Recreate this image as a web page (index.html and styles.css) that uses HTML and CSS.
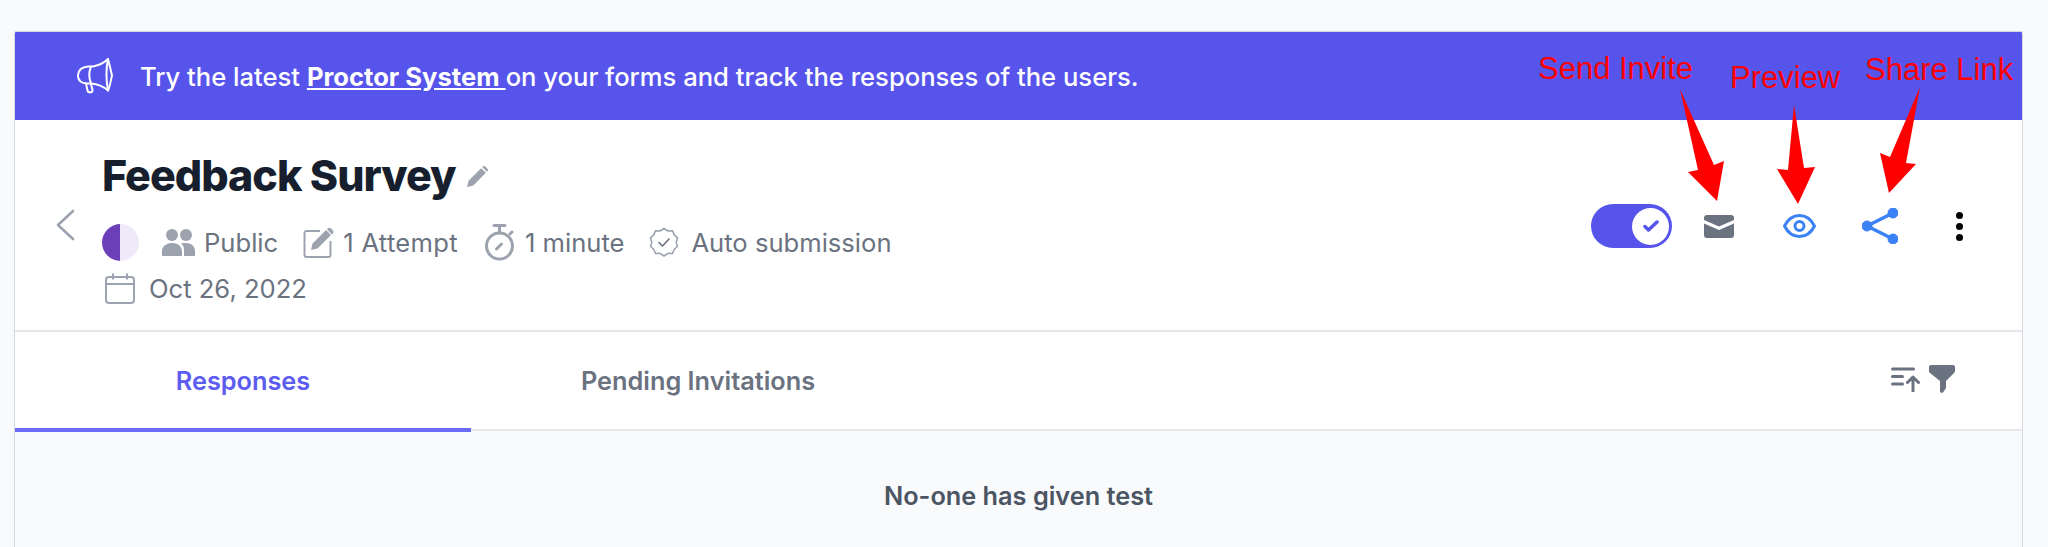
FILE: index.html
```html
<!DOCTYPE html>
<html lang="en">
<head>
<meta charset="utf-8">
<title>Feedback Survey</title>
<link rel="stylesheet" href="styles.css">
</head>
<body>
<main class="card">
  <div class="banner">
    <svg class="banner-icon" viewBox="0 0 36 36" fill="none" stroke="#fff" stroke-width="2" stroke-linejoin="round" stroke-linecap="round"><path d="M11 8.500C6 9 1.500 11 1 17c-.3 5 3 8 9 8.500h4C21 26 27 29 31 32.500c2-4 2.500-9 4-15-1.500-6-2.500-11-4-16.500-4 4-10 6.500-15 7.500z"/><path d="M14 8.500c-2 5-2.500 11 0 17M31 1c-2 10-2 21 0 31.500"/><path d="M9 25.500l1.500 7c.5 2.500 5.500 2.500 5-.5L14 26"/></svg>
    <p class="banner-text">Try the latest <a class="banner-link" href="#">Proctor System </a>on your forms and track the responses of the users.</p>
  </div>

  <section class="header">
    <svg class="back" viewBox="0 0 20 32" fill="none" stroke="#9ca3af" stroke-width="2.600" stroke-linecap="round" stroke-linejoin="round"><path d="M18 2 3 16l15 14"/></svg>
    <div class="info">
      <div class="title-row">
        <h1 class="title">Feedback Survey</h1>
        <svg class="title-edit" viewBox="0 0 22 22" fill="#9ca3af"><path d="M1 21l1.500-6L14.500 3l4.500 4.500L7 19.500zM16 1.500a1.800 1.800 0 0 1 2.500 0l2 2a1.800 1.800 0 0 1 0 2.500L20 6.500 15.500 2z"/></svg>
      </div>
      <div class="meta-row">
        <span class="half"></span>
        <span class="meta">
          <svg class="ic-people" viewBox="0 0 33 27" fill="#9ca3af"><circle cx="10" cy="6" r="6"/><circle cx="24" cy="6" r="6"/><path d="M0 27v-5c0-5 5-8 10-8s9 2 10 8v5zM22 27v-6c0-3-1-5-3-6.500 1.500-.5 3-.5 5-.5 5 0 9 3 9 8v5z"/></svg>
          <span>Public</span>
        </span>
        <span class="meta meta-attempt">
          <svg class="ic-note" viewBox="0 0 31 31" fill="none"><path d="M17 4H3.500A2 2 0 0 0 1.500 6v22a2 2 0 0 0 2 2h22a2 2 0 0 0 2-2V14" stroke="#9ca3af" stroke-width="2"/><path d="M8 23l1.500-6.500L23 3l5 5-13.500 13.500zM25 1.300a2 2 0 0 1 2.700 0l2.300 2.300a2 2 0 0 1 0 2.700L29 7.500 24 2.500z" fill="#9ca3af"/></svg>
          <span>1 Attempt</span>
        </span>
        <span class="meta">
          <svg class="ic-timer" viewBox="0 0 29 37" fill="none" stroke="#9ca3af" stroke-width="3" stroke-linecap="round"><path d="M9 1.500h11M14.500 2v6"/><circle cx="14.500" cy="22" r="13"/><path d="M25 10l2-2M11.500 25l5-5"/></svg>
          <span>1 minute</span>
        </span>
        <span class="meta">
          <svg class="ic-badge" viewBox="0 0 30 30" fill="none" stroke="#9ca3af" stroke-width="1.600" stroke-linecap="round" stroke-linejoin="round"><path d="M15 1.500l4 2.500 4.500-.3 1.800 4.200 3.200 3-1.300 4.600 1.300 4-3.400 3-1.600 4-4.500-.2-4 2.700-4-2.700-4.500.2-1.600-4-3.400-3 1.300-4-1.300-4.600 3.200-3 1.800-4.200 4.500.3z"/><path d="M10 15.500l3.500 3.500 6.500-7" stroke="#6b7280"/></svg>
          <span>Auto submission</span>
        </span>
      </div>
      <div class="date-row">
        <svg class="ic-cal" viewBox="0 0 30 31" fill="none" stroke="#9ca3af" stroke-width="2"><rect x="1" y="4" width="28" height="26" rx="3"/><path d="M1 11h28M8 .5v6M22 .5v6"/></svg>
        <span>Oct 26, 2022</span>
      </div>
    </div>
    <div class="actions">
      <span class="toggle"><span class="knob"><svg viewBox="0 0 16 14" fill="none" stroke="#5754ec" stroke-width="3.500" stroke-linecap="round" stroke-linejoin="round"><path d="M2 7.500l3.500 3.500L14 3"/></svg></span></span>
      <svg class="ic-mail" viewBox="0 0 30 23"><path d="M3 0h24a3 3 0 0 1 3 3v2L15 11.500 0 5V3a3 3 0 0 1 3-3z" fill="#6b7280"/><path d="M0 8.500l15 6.500 15-6.500V20a3 3 0 0 1-3 3H3a3 3 0 0 1-3-3z" fill="#6b7280"/></svg>
      <svg class="ic-eye" viewBox="0 0 33 24" fill="none" stroke="#3b82f6" stroke-width="3"><path d="M1.500 12C5 5 10 1.500 16.500 1.500S28 5 31.500 12C28 19 23 22.500 16.500 22.500S5 19 1.500 12z"/><circle cx="16.500" cy="12" r="4.500"/></svg>
      <svg class="ic-share" viewBox="0 0 36 36" fill="#3b82f6" stroke="#3b82f6"><circle cx="5" cy="18" r="5"/><circle cx="31" cy="5" r="5"/><circle cx="31" cy="31" r="5"/><path d="M5 18 31 5M5 18l26 13" stroke-width="3.500" fill="none"/></svg>
      <span class="dots"><i></i><i></i><i></i></span>
    </div>
  </section>

  <nav class="tabs">
    <a class="tab tab-active" href="#">Responses</a>
    <a class="tab" href="#">Pending Invitations</a>
    <div class="tab-tools">
      <svg class="ic-sort" viewBox="0 0 29 25" fill="none" stroke="#6b7280" stroke-width="3" stroke-linecap="round" stroke-linejoin="round"><path d="M1.500 2h21M1.500 9.500h10M1.500 17h10M22 24V11M16.500 15.500 22 10l5.500 5.500"/></svg>
      <svg class="ic-funnel" viewBox="0 0 26 28" fill="#6b7280"><path d="M2 0h22a2 2 0 0 1 2 2v4c0 1-.5 1.500-1 2l-8 8v7l-3 4.500c-.5.500-3 .500-3-1V16L1 8C.500 7.500 0 7 0 6V2a2 2 0 0 1 2-2z"/></svg>
    </div>
  </nav>

  <p class="empty">No-one has given test</p>
</main>

<svg class="annotations" viewBox="0 0 2048 547" aria-hidden="true">
  <polygon fill="#ff0000" points="1680,89 1714,165 1724,161 1717,201 1688,172 1698,170"/>
  <polygon fill="#ff0000" points="1794,105 1804,168 1815,167 1798,204 1777,169 1788,170"/>
  <polygon fill="#ff0000" points="1920,87 1906,163 1916,164 1889,193 1880,153 1890,157"/>
</svg>
<span class="note note-send">Send Invite</span>
<span class="note note-preview">Preview</span>
<span class="note note-share">Share Link</span>
</body>
</html>
```

FILE: styles.css
```css
* { box-sizing: border-box; }

html, body { height: 100%; }

body {
  margin: 0;
  height: 547px;
  overflow: hidden;
  padding: 31px 25px 0 14px;
  background: #f9fafb;
  font-family: Inter, "Liberation Sans", sans-serif;
  color: #6b7280;
  position: relative;
}

.card {
  height: 516px;
  border: 1px solid #d5d8de;
  border-bottom: 0;
  border-radius: 2px 2px 0 0;
  background: #f9fafb;
  overflow: hidden;
}

.banner {
  height: 88px;
  background: #5754ec;
  display: flex;
  align-items: center;
  padding-left: 62px;
  gap: 27px;
  color: #fff;
}

.banner-icon { width: 36px; height: 36px; flex: none; }

.banner-text {
  margin: 0;
  font-size: 25.6px;
  font-weight: 500;
  white-space: nowrap;
}

.banner-link { color: #fff; font-weight: 700; text-decoration: underline; }

.header {
  height: 210px;
  background: #fff;
  display: flex;
  position: relative;
  padding-left: 40px;
}

.back { width: 20px; height: 32px; margin-top: 89px; flex: none; }

.info { margin-left: 27px; padding-top: 30px; }

.title-row { display: flex; align-items: center; gap: 10px; height: 50px; }

.title {
  margin: 0;
  font-size: 43px;
  line-height: 50px;
  font-weight: 800;
  color: #171f2e;
  letter-spacing: -1px;
  white-space: nowrap;
}

.title-edit { width: 23px; height: 23px; margin-top: 2px; }

.meta-row {
  display: flex;
  align-items: center;
  height: 38px;
  margin-top: 23px;
  gap: 25px;
  font-size: 25.6px;
  white-space: nowrap;
}

.half {
  width: 37px;
  height: 37px;
  border-radius: 50%;
  background: linear-gradient(90deg, #6b3fb8 50%, #efe9f9 50%);
  flex: none;
  margin-right: -2px;
}

.meta { display: flex; align-items: center; gap: 9px; }

.meta-attempt { letter-spacing: 0.3px; margin-right: 2px; }

.ic-people { width: 33px; height: 27px; }
.ic-note { width: 31px; height: 31px; }
.ic-timer { width: 29px; height: 37px; margin-right: 2px; }
.ic-badge { width: 30px; height: 30px; margin-right: 3px; }
.ic-cal { width: 30px; height: 31px; }

.date-row {
  display: flex;
  align-items: center;
  gap: 14px;
  margin: 9px 0 0 3px;
  height: 36px;
  font-size: 25.6px;
  white-space: nowrap;
}

.actions {
  position: absolute;
  top: 84px;
  left: 1576px;
  display: flex;
  align-items: center;
  height: 44px;
}

.toggle {
  width: 81px;
  height: 44px;
  border-radius: 22px;
  background: #5754ec;
  display: flex;
  align-items: center;
  justify-content: flex-end;
  padding-right: 3px;
  flex: none;
}

.knob {
  width: 37px;
  height: 37px;
  border-radius: 50%;
  background: #fff;
  display: flex;
  align-items: center;
  justify-content: center;
}

.knob svg { width: 16px; height: 14px; }

.ic-mail { width: 30px; height: 23px; margin-left: 32px; flex: none; }
.ic-eye { width: 33px; height: 24px; margin-left: 49px; flex: none; }
.ic-share { width: 36px; height: 36px; margin-left: 46px; flex: none; }

.dots {
  display: flex;
  flex-direction: column;
  gap: 4px;
  margin-left: 58px;
  flex: none;
}

.dots i { width: 7px; height: 7px; border-radius: 50%; background: #000; display: block; }

.tabs {
  height: 101px;
  background: #fff;
  border-top: 2px solid #e5e7eb;
  border-bottom: 2px solid #e5e7eb;
  display: flex;
  position: relative;
}

.tab {
  width: 456px;
  height: 100px;
  display: flex;
  align-items: center;
  justify-content: center;
  padding-bottom: 4px;
  font-size: 25.3px;
  font-weight: 600;
  color: #6b7280;
  text-decoration: none;
  flex: none;
}

.tab-active { color: #5c5cf0; border-bottom: 4px solid #6a6cf6; padding-bottom: 0; }

.tab + .tab { width: 454px; }

.tab-tools {
  margin-left: auto;
  margin-right: 67px;
  display: flex;
  align-items: center;
  gap: 9px;
  padding-bottom: 4px;
}

.ic-sort { width: 29px; height: 25px; margin-top: 1px; }
.ic-funnel { width: 26px; height: 28px; }

.empty {
  margin: 50px 0 0;
  text-align: center;
  font-size: 25.3px;
  font-weight: 600;
  line-height: 30px;
  color: #4b5563;
}

.annotations {
  position: absolute;
  top: 0;
  left: 0;
  width: 2048px;
  height: 547px;
  pointer-events: none;
}

.note {
  position: absolute;
  font-family: "Liberation Sans", Arial, sans-serif;
  font-size: 31px;
  line-height: 34px;
  color: #ff0000;
  white-space: nowrap;
}

.note-send { left: 1538px; top: 52px; }
.note-preview { left: 1730px; top: 61px; }
.note-share { left: 1865px; top: 53px; }
```
